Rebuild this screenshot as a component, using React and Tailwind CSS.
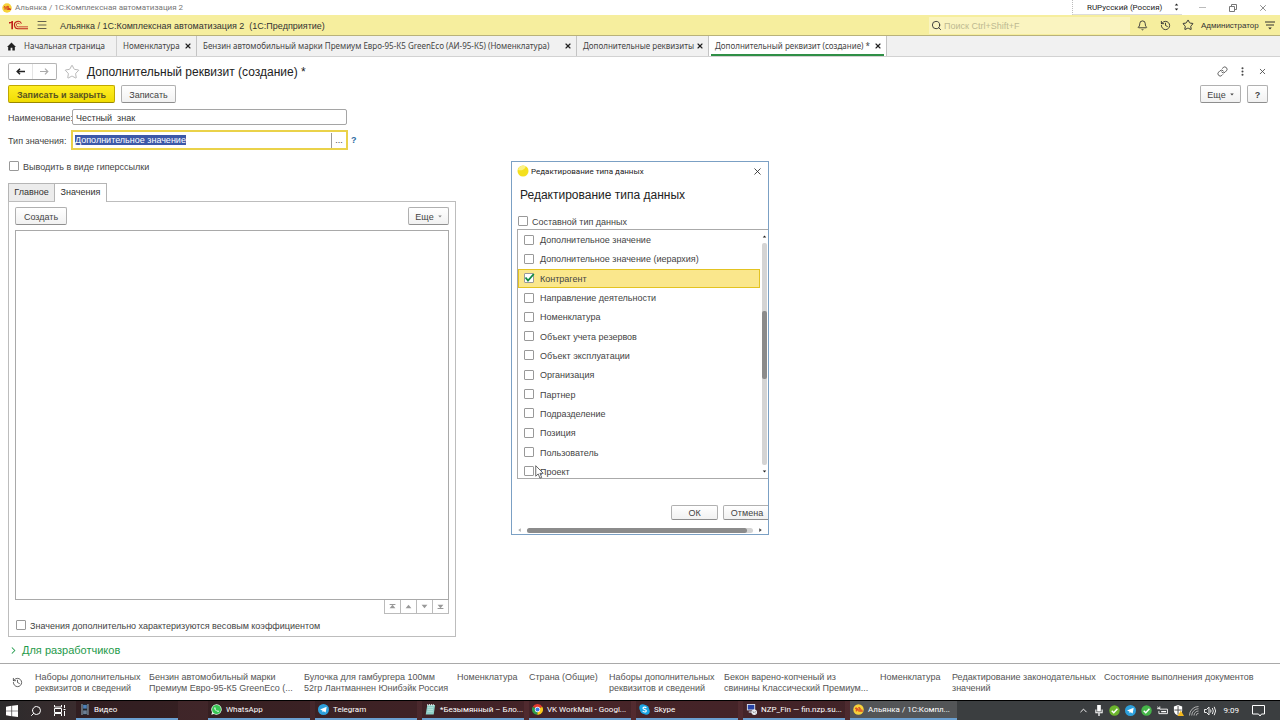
import { useEffect, useRef } from "react";
import { Bell, History, Star, Search, Link, X, Menu, ChevronUp, ChevronRight, MoreVertical } from "lucide-react";

const openTabs = [
  { title: "Номенклатура", width: "w-[80px]" },
  { title: "Бензин автомобильный марки Премиум Евро-95-К5 GreenEco (АИ-95-К5) (Номенклатура)", width: "w-[380px]" },
  { title: "Дополнительные реквизиты", width: "w-[132px]" },
  { title: "Дополнительный реквизит (создание) *", width: "w-[178px]", active: true },
];

const dataTypes = [
  "Дополнительное значение",
  "Дополнительное значение (иерархия)",
  "Контрагент",
  "Направление деятельности",
  "Номенклатура",
  "Объект учета резервов",
  "Объект эксплуатации",
  "Организация",
  "Партнер",
  "Подразделение",
  "Позиция",
  "Пользователь",
  "Проект",
];

const recent = [
  ["Наборы дополнительных", "реквизитов и сведений"],
  ["Бензин автомобильный марки", "Премиум Евро-95-К5 GreenEco (..."],
  ["Булочка для гамбургера 100мм", "52гр Лантманнен Юнибэйк Россия"],
  ["Номенклатура"],
  ["Страна (Общие)"],
  ["Наборы дополнительных", "реквизитов и сведений"],
  ["Бекон варено-копченый из", "свинины Классический Премиум..."],
  ["Номенклатура"],
  ["Редактирование законодательных", "значений"],
  ["Состояние выполнения документов"],
];

function OneCBadge({ className }) {
  return (
    <svg viewBox="0 0 20 20" className={className} aria-hidden="true">
      <circle cx="10" cy="10" r="9.5" fill="#f7d23a" />
      <path d="M3.500 8.500 6 6.800V13.500M14 8.200A3.200 3.200 0 1 0 11.500 13H18M13 10a1.300 1.300 0 1 0-1.200 1H17" fill="none" stroke="#d0271d" strokeWidth="1.600" />
    </svg>
  );
}

function OneCLogo() {
  return (
    <svg viewBox="0 0 57 30" className="h-[10px] w-[19px]" aria-label="1С">
      <g fill="none" stroke="#c0201a">
        <path d="M0 9 9 5M9.500 3V28" strokeWidth="5" />
        <path d="M37.500 11A11 11 0 1 0 28 26H57" strokeWidth="3.200" />
        <path d="M32.500 13A5.500 5.500 0 1 0 28 20.500H57" strokeWidth="2.400" />
      </g>
    </svg>
  );
}

function CheckBox({ id, label, checked, className = "", gap = "gap-[5px]" }) {
  return (
    <div className={`flex items-center ${gap} ${className}`}>
      <span className="grid size-[10px] shrink-0 place-items-center">
        <input
          id={id}
          type="checkbox"
          defaultChecked={checked}
          className="peer col-start-1 row-start-1 size-[10px] appearance-none rounded-[1px] border border-[#999] bg-white"
        />
        <svg viewBox="0 0 10 10" className="pointer-events-none invisible col-start-1 row-start-1 size-[10px] overflow-visible peer-checked:visible" aria-hidden="true">
          <path d="M1.500 4.500 4 7.500 9.800 1" fill="none" stroke="#128a43" strokeWidth="1.800" />
        </svg>
      </span>
      <label htmlFor={id} className="pt-px leading-[12px] whitespace-nowrap">{label}</label>
    </div>
  );
}

function PushButton({ children, height = "h-[18px]", className = "" }) {
  return (
    <button type="button" className={`flex items-center justify-center rounded-[2px] border border-[#b0b0b0] border-b-[#8e8e8e] bg-linear-to-b from-white to-[#f1f1f1] pt-px leading-[12px] text-[#444] ${height} ${className}`}>
      {children}
    </button>
  );
}

function Triangle({ dir, className = "", bar }) {
  return (
    <svg viewBox="0 0 8 6" className={className} fill="currentColor" aria-hidden="true">
      {dir === "up" && <path d="M4 1 7.500 5H.5z" />}
      {dir === "down" && <path d="M4 5 .5 1h7z" />}
      {dir === "left" && <path d="M2 3 6 0v6z" />}
      {dir === "right" && <path d="M6 3 2 0v6z" />}
      {bar && <path d={dir === "up" ? "M.5 0h7v1.200H.5z" : "M.5 4.800h7V6H.5z"} />}
    </svg>
  );
}

function TitleBar() {
  return (
    <header className="flex h-[15px] items-center bg-white pr-[12px] pl-[2px] font-[Roboto,sans-serif] text-[8px] text-[#777]">
      <OneCBadge className="size-[10px]" />
      <span className="ml-[3px] pt-px">Альянка / 1С:Комплексная автоматизация 2</span>
      <div className="ml-auto flex h-full w-[110px] items-center border-b border-l border-b-[#ddd] border-l-[#bbb] pr-[3px] pl-[14px] [border-left-style:dotted]">
        <span className="pt-px whitespace-nowrap text-[#222]">RUРусский (Россия)</span>
        <span className="ml-auto flex flex-col gap-[2px] text-[#222]">
          <Triangle dir="up" className="h-[3px] w-[5px]" />
          <Triangle dir="down" className="h-[3px] w-[5px]" />
        </span>
      </div>
      <button type="button" aria-label="Свернуть" className="ml-[17px] h-px w-[7px] bg-[#bbb]" />
      <button type="button" aria-label="Восстановить" className="ml-[23px]">
        <svg viewBox="0 0 8 8" className="size-[8px]" fill="none" stroke="#777">
          <path d="M.5 2.500h5v5h-5zM2.500 2V.5h5v5H6" />
        </svg>
      </button>
      <button type="button" aria-label="Закрыть" className="ml-[21px]">
        <X className="size-[10px]" strokeWidth={2} />
      </button>
    </header>
  );
}

function AppBar() {
  return (
    <div className="flex h-[21px] items-center border-b border-[#b9b27a] bg-[#f6ee9e] pr-[5px] pl-[9px] text-[9px] text-[#333]">
      <OneCLogo />
      <button type="button" aria-label="Меню" className="ml-[8px]"><Menu className="size-[12px]" strokeWidth={1.5} /></button>
      <span className="ml-[12px] pt-px leading-[12px] whitespace-pre">Альянка / 1С:Комплексная автоматизация 2  (1С:Предприятие)</span>
      <div className="ml-auto flex h-[17px] w-[201px] items-center gap-[2px] bg-[#faf4c0] pl-[2px]">
        <Search className="size-[11px]" strokeWidth={2} />
        <input aria-label="Поиск" placeholder="Поиск Ctrl+Shift+F" className="min-w-0 flex-1 bg-transparent pt-px leading-[12px] outline-none placeholder:text-[#bdb991]" />
      </div>
      <button type="button" aria-label="Уведомления" className="ml-[7px]"><Bell className="size-[11px]" strokeWidth={2} /></button>
      <button type="button" aria-label="История" className="ml-[12px]"><History className="size-[11px]" strokeWidth={2} /></button>
      <button type="button" aria-label="Избранное" className="ml-[11px]"><Star className="size-[12px]" strokeWidth={2} /></button>
      <span className="ml-[7px] w-[64px] pt-px text-[8px] leading-[12px] whitespace-nowrap">Администратор</span>
      <button type="button" aria-label="Параметры">
        <svg viewBox="0 0 10 10" className="size-[10px]" fill="#333">
          <path d="M0 1.500h10v1H0zM1 4.500h8v1H1zM3.200 7.500h3.600L5 9.500z" />
        </svg>
      </button>
    </div>
  );
}

function TabBar() {
  return (
    <nav className="flex h-[21px] items-stretch border-b border-[#d2d2d2] bg-[#f1f1f1] font-['Noto_Sans','Open_Sans',sans-serif] text-[8px] leading-[12px] text-[#444]">
      <a href="#home" className="flex w-[117px] items-center gap-[8px] border-r border-[#cfcfcf] pl-[7px] whitespace-nowrap">
        <svg viewBox="0 0 10 10" className="size-[9px]" fill="#222" aria-hidden="true">
          <path d="M5 .5 10 5.500H8.700V9.500H6V6.500H4v3H1.300V5.500H0z" />
        </svg>
        <span>Начальная страница</span>
      </a>
      {openTabs.map((tab) => (
        <div
          key={tab.title}
          className={`flex items-stretch border-r border-[#c4c4c4] px-[2px] ${tab.width} ${tab.active ? "bg-white" : ""}`}
        >
          <div className={`flex flex-1 items-center justify-between border-b-2 pt-[2px] pr-[2px] pl-[4px] ${tab.active ? "border-[#2f8f46]" : "border-transparent"}`}>
            <a href="#tab" className="whitespace-nowrap">{tab.title}</a>
            <button type="button" aria-label="Закрыть вкладку" className="shrink-0">
              <X className="size-[8px] text-[#222]" strokeWidth={3.500} />
            </button>
          </div>
        </div>
      ))}
    </nav>
  );
}

function RequisiteForm() {
  const typeRef = useRef(null);
  useEffect(() => {
    typeRef.current.focus({ preventScroll: true });
    typeRef.current.select();
  }, []);

  return (
    <main className="flex flex-1 flex-col px-[8px] pt-[6px] text-[9px] text-[#444]">
      <div className="flex h-[17px] items-center">
        <div className="flex h-[17px] w-[49px] rounded-[2px] border border-[#b5b5b5] border-b-[#999]">
          <button type="button" aria-label="Назад" className="grid flex-1 place-items-center border-r border-[#e4e4e4]">
            <svg viewBox="0 0 9 7" className="h-[7px] w-[9px]" fill="none" stroke="#222" strokeWidth="1.500"><path d="M9 3.500H1M4 .7 1.200 3.500 4 6.300" /></svg>
          </button>
          <button type="button" aria-label="Вперед" className="grid flex-1 place-items-center">
            <svg viewBox="0 0 9 7" className="h-[7px] w-[9px]" fill="none" stroke="#aaa" strokeWidth="1.200"><path d="M0 3.500h8M5 .7l2.800 2.800L5 6.300" /></svg>
          </button>
        </div>
        <Star className="ml-[7px] size-[16px] text-[#a5a5a5]" strokeWidth={1.200} />
        <h1 className="ml-[7px] text-[12px] leading-[14px] whitespace-nowrap text-[#222]">Дополнительный реквизит (создание) *</h1>
        <button type="button" aria-label="Ссылка" className="ml-auto"><Link className="size-[11px]" strokeWidth={1.800} /></button>
        <button type="button" aria-label="Действия" className="ml-[9px]"><MoreVertical className="size-[11px]" strokeWidth={2.500} /></button>
        <button type="button" aria-label="Закрыть форму" className="mr-[5px] ml-[10px]"><X className="size-[9px]" strokeWidth={2.200} /></button>
      </div>

      <div className="mt-[5px] flex items-center gap-[6px]">
        <button type="button" className="h-[18px] w-[107px] rounded-[2px] border border-[#c0a800] border-b-[#9a8800] bg-linear-to-b from-[#ffee22] to-[#f0dc00] pt-px leading-[12px] font-bold whitespace-nowrap text-[#5a5420]">
          Записать и закрыть
        </button>
        <PushButton className="w-[55px]">Записать</PushButton>
        <PushButton className="ml-auto w-[41px] gap-[4px]">Еще <Triangle dir="down" className="h-[3px] w-[4px]" /></PushButton>
        <PushButton className="mr-[4px] w-[21px] font-bold">?</PushButton>
      </div>

      <div className="mt-[6px] flex h-[16px] items-center">
        <label htmlFor="name" className="w-[64px] pt-px leading-[12px] whitespace-nowrap">Наименование:</label>
        <input id="name" defaultValue="Честный  знак" className="h-[16px] w-[275px] rounded-[2px] border border-[#a5a5a5] px-[3px] pt-px text-[#333] outline-none" />
      </div>
      <div className="mt-[5px] flex h-[20px] items-center">
        <label htmlFor="value-type" className="w-[63px] pt-px leading-[12px] whitespace-nowrap">Тип значения:</label>
        <div className="flex h-[20px] w-[277px] items-center border-2 border-[#ead24a] bg-white">
          <input
            ref={typeRef}
            id="value-type"
            defaultValue="Дополнительное значение"
            className="h-[14px] min-w-0 flex-1 px-[2px] leading-[10px] outline-none selection:bg-[#3c58a8] selection:text-white"
          />
          <button type="button" aria-label="Выбрать тип" className="h-[15px] w-[15px] border-l border-[#999] leading-[10px]">...</button>
        </div>
        <button type="button" className="ml-[3px] pt-px font-bold text-[#2c6ca3]">?</button>
      </div>
      <CheckBox id="as-link" label="Выводить в виде гиперссылки" className="mt-[10px] h-[12px] px-px" gap="gap-[4px]" />

      <div role="tablist" className="mt-[11px] flex h-[18px] text-[#333]">
        <button role="tab" aria-selected="false" type="button" className="w-[47px] border border-b-0 border-[#b5b5b5] bg-[#ececec]">Главное</button>
        <button role="tab" aria-selected="true" type="button" className="z-10 -mb-px w-[52px] border border-b-0 border-l-0 border-[#b5b5b5] bg-white">Значения</button>
      </div>
      <section className="flex w-[448px] flex-1 flex-col border border-[#bdbdbd] px-[6px] pt-[5px]">
        <div className="flex justify-between">
          <PushButton className="w-[52px]">Создать</PushButton>
          <PushButton className="w-[41px] gap-[4px]">Еще <Triangle dir="down" className="h-[3px] w-[4px] text-[#888]" /></PushButton>
        </div>
        <div className="mt-[5px] flex-1 border border-[#a9a9a9]" />
        <div className="ml-auto flex h-[14px] border-r border-b border-[#bbb] text-[#999]">
          {[["up", true], ["up", false], ["down", false], ["down", true]].map(([dir, bar], i) => (
            <button key={i} type="button" aria-label="Переместить" className="grid w-[16px] place-items-center border-l border-[#bbb]">
              <Triangle dir={dir} bar={bar} className="h-[5px] w-[7px]" />
            </button>
          ))}
        </div>
        <CheckBox id="weighted" label="Значения дополнительно характеризуются весовым коэффициентом" className="mt-[5px] mb-[5px] h-[12px] px-px" gap="gap-[4px]" />
      </section>
      <a href="#dev" className="flex h-[26px] items-center gap-[3px] text-[11px] text-[#1f9a4b]">
        <ChevronRight className="size-[11px]" strokeWidth={2.200} />
        Для разработчиков
      </a>
    </main>
  );
}

function TypeDialog() {
  return (
    <div role="dialog" aria-labelledby="dialog-title" className="absolute top-[161px] left-[511px] flex h-[374px] w-[258px] flex-col overflow-hidden border border-[#7ba0c4] bg-white pl-[5px] text-[9px] text-[#444]">
      <div className="flex h-[18px] shrink-0 items-center pr-[5px] font-[Roboto,sans-serif] text-[8px] text-[#222]">
        <svg viewBox="0 0 12 12" className="size-[12px]" aria-hidden="true">
          <circle cx="6" cy="6" r="5.500" fill="#f4e01e" />
          <path d="M1 5a5 5 0 0 1 8-3.500C7 5 4 6 1 5z" fill="#fbf184" />
        </svg>
        <span className="ml-[2px] pt-px">Редактирование типа данных</span>
        <button type="button" aria-label="Закрыть" className="ml-auto"><X className="size-[11px]" strokeWidth={1.800} /></button>
      </div>
      <h2 id="dialog-title" className="mt-[6px] ml-[3px] h-[18px] shrink-0 text-[12px] leading-[18px] text-[#222]">Редактирование типа данных</h2>
      <CheckBox id="composite" label="Составной тип данных" className="mt-[11px] h-[12px] shrink-0 px-px" gap="gap-[4px]" />
      <div className="mt-[2px] flex h-[250px] shrink-0 overflow-hidden border border-r-0 border-[#aaa]">
        <ul className="grid h-[251px] w-[242px] auto-rows-fr">
          {dataTypes.map((name, i) => (
            <li key={name} className={`flex items-center border px-[5px] ${name === "Контрагент" ? "border-[#e3c321] bg-[#fae78c]" : "border-transparent"}`}>
              <CheckBox id={`type-${i}`} label={name} checked={name === "Контрагент"} gap="gap-[6px]" />
            </li>
          ))}
        </ul>
        <div className="ml-[2px] flex w-[5px] flex-col items-center py-[5px] text-[#222]">
          <Triangle dir="up" className="h-[3px] w-[5px]" />
          <div className="my-[5px] w-[5px] flex-1 rounded-[2px] bg-[#d4d4d4] pt-[68px]">
            <div className="h-[68px] rounded-[2px] bg-[#8b8b8b]" />
          </div>
          <Triangle dir="down" className="h-[3px] w-[5px]" />
        </div>
      </div>
      <div className="mt-[26px] flex shrink-0 gap-[5px] pl-[154px]">
        <PushButton height="h-[15px]" className="w-[47px] shrink-0">ОК</PushButton>
        <PushButton height="h-[15px]" className="w-[48px] shrink-0">Отмена</PushButton>
      </div>
      <div className="mt-[7px] flex h-[6px] shrink-0 items-center pr-[5px] text-[#444]">
        <Triangle dir="left" className="h-[4px] w-[5px] text-[#aaa]" />
        <div className="mx-[5px] h-[5px] flex-1 rounded-full bg-[#d4d4d4] pr-[6px]">
          <div className="h-[5px] rounded-full bg-[#8b8b8b]" />
        </div>
        <Triangle dir="right" className="h-[4px] w-[5px]" />
      </div>
    </div>
  );
}

function RecentBar() {
  return (
    <div className="flex h-[37px] items-center border-t border-[#a9a9a9] bg-white pl-[12px] text-[9px] leading-[11px] text-[#555]">
      <History className="size-[11px] shrink-0 text-[#444]" strokeWidth={1.800} />
      <div className="ml-[12px] grid grid-cols-[114px_155px_153px_72px_80px_115px_156px_72px_152px_auto] pt-px whitespace-nowrap">
        {recent.map((lines, i) => (
          <a key={i} href="#recent" className="block">
            {lines.map((line) => <span key={line} className="block">{line}</span>)}
          </a>
        ))}
      </div>
    </div>
  );
}

function ChromeIcon() {
  return (
    <svg viewBox="0 0 12 12" className="size-[11px]">
      <path d="M6 6 .8 3A6 6 0 0 1 11.200 3z" fill="#e33b2e" />
      <path d="M6 6 .8 3A6 6 0 0 0 6 12z" fill="#2f9e4b" />
      <path d="M6 6 11.200 3A6 6 0 0 1 6 12z" fill="#f8c81c" />
      <circle cx="6" cy="6" r="2.900" fill="#fff" />
      <circle cx="6" cy="6" r="2.200" fill="#3b7de8" />
    </svg>
  );
}

function TelegramIcon() {
  return (
    <svg viewBox="0 0 12 12" className="size-[11px]">
      <circle cx="6" cy="6" r="6" fill="#2da0dc" />
      <path d="M2.200 5.900 9.500 3 8.300 9.300 6.200 7.800 5 9 4.800 7z" fill="#fff" />
    </svg>
  );
}

function CheckBadge({ className }) {
  return (
    <svg viewBox="0 0 12 12" className="size-[11px]">
      <circle cx="6" cy="6" r="5.700" className={className} />
      <path d="M3 6.200 5.200 8.400 9.200 4" fill="none" stroke="#fff" strokeWidth="1.600" />
    </svg>
  );
}

const apps = [
  {
    title: "Видео",
    spacing: "mr-[25px]",
    icon: (
      <svg viewBox="0 0 12 12" className="size-[11px]">
        <path d="M2.500 0h8v12h-8z" fill="#20262e" />
        <path d="M2.500 0h1.500v12H2.500zM9 0h1.500v12H9z" fill="#7e8894" />
        <path d="M4.500 1h4v4h-4z" fill="#4d7fb8" /><path d="M4.500 7h4v4h-4z" fill="#6c7f96" />
      </svg>
    ),
  },
  {
    title: "WhatsApp",
    icon: (
      <svg viewBox="0 0 12 12" className="size-[11px]">
        <path d="M6 .3A5.700 5.700 0 1 1 3.200 11L.3 11.800 1.200 9A5.700 5.700 0 0 1 6 .3z" fill="#e9f9ec" />
        <circle cx="6" cy="6" r="4.900" fill="#37c653" />
        <path d="M4.300 3.200C3 4.200 3.800 6 5 7.200S8 9 8.800 7.800L7.500 6.900l-.7.6C6 7.200 5 6.200 4.700 5.400l.5-.7z" fill="#fff" />
      </svg>
    ),
  },
  { title: "Telegram", icon: <TelegramIcon /> },
  {
    title: "*Безымянный – Бло...",
    icon: (
      <svg viewBox="0 0 12 12" className="size-[11px]">
        <path d="M2.500 1h8.500L9.500 11.500H.8z" fill="#8fd0c8" />
        <path d="M3 0v2M5 0v2M7 0v2M9 0v2" stroke="#e6efef" />
        <path d="M3 4h6M2.800 6h6M2.500 8h6" stroke="#c8ebe6" strokeWidth=".7" />
      </svg>
    ),
  },
  { title: "VK WorkMail - Googl...", icon: <ChromeIcon /> },
  {
    title: "Skype",
    icon: (
      <svg viewBox="0 0 12 12" className="size-[11px]">
        <circle cx="4" cy="4" r="3.700" fill="#1aa6e4" /><circle cx="8" cy="8" r="3.700" fill="#1aa6e4" /><circle cx="6" cy="6" r="5" fill="#1aa6e4" />
        <path d="M8 4.400C7.300 3 4.300 3 4.300 4.600 4.300 6.200 8 5.600 8 7.400 8 9.200 4.700 9 4 7.500" fill="none" stroke="#fff" strokeWidth="1.200" />
      </svg>
    ),
  },
  {
    title: "NZP_Fin — fin.nzp.su...",
    icon: (
      <svg viewBox="0 0 12 12" className="size-[11px]">
        <path d="M1 0h9v7H1z" fill="#d7dce8" /><path d="M2 1h7v5H2z" fill="#2743a5" />
        <path d="M3 8h5v1.500H3z" fill="#b9c0cc" /><circle cx="9" cy="9" r="3" fill="#eef0f4" />
        <path d="m7.500 8 1 1-1 1M10.500 8l-1 1 1 1" fill="none" stroke="#555" strokeWidth=".7" />
      </svg>
    ),
  },
  { title: "Альянка / 1С:Компл...", active: true, icon: <OneCBadge className="size-[11px]" /> },
];

function Taskbar() {
  return (
    <footer className="flex h-[20px] items-stretch border-t border-black bg-[#3b3e40] font-[Roboto,sans-serif] text-[8px] text-white">
      <div className="flex w-[76px] shrink-0 items-center bg-linear-to-r from-[#2c2b2c] to-[#3a2c2e] pl-[6px]">
        <button type="button" aria-label="Пуск">
          <svg viewBox="0 0 11 11" className="size-[12px]" fill="#fff"><path d="M0 1.500 5 .8v4.400H0zM5.600.7 11 0v5.200H5.600zM0 5.800h5v4.400l-5-.7zM5.600 5.800H11V11l-5.400-.7z" /></svg>
        </button>
        <button type="button" aria-label="Поиск" className="ml-[12px]"><Search className="size-[12px] -scale-x-100" strokeWidth={2} /></button>
        <button type="button" aria-label="Представление задач" className="ml-[12px]">
          <svg viewBox="0 0 12 11" className="h-[11px] w-[12px]" fill="none" stroke="#fff"><path d="M.5 0v2h7V0M.5 11V8.500h7V11M.5 3.500h7v4h-7zM10.500 0v3M10.500 6v5M9.500 4.500h2" /></svg>
        </button>
      </div>
      <div className="flex shrink-0 gap-[5px] bg-linear-to-r from-[#3a2427] via-[#542b30] via-60% to-[#4a2a2e]">
        {apps.map((app) => (
          <button
            key={app.title}
            type="button"
            className={`flex items-center gap-[4px] border-b-2 border-[#6a9fd0] pl-[3px] whitespace-nowrap ${app.spacing ?? ""} ${app.active ? "w-[107px] bg-[#535557]" : "w-[102px] bg-black/15"}`}
          >
            <span className="shrink-0">{app.icon}</span>
            <span className="pt-px">{app.title}</span>
          </button>
        ))}
      </div>
      <div className="ml-auto flex items-center gap-[5px] pr-[15px]">
        <ChevronUp className="size-[11px]" strokeWidth={2} />
        <svg viewBox="0 0 10 12" className="h-[11px] w-[10px]" fill="#fff"><path d="M3 0h4v7H3zM1 5h1.200v3h5.600V5H9v4H5.700v3H4.300V9H1z" /></svg>
        <CheckBadge className="fill-[#6cb52d]" />
        <TelegramIcon />
        <CheckBadge className="fill-[#46b649]" />
        <svg viewBox="0 0 12 10" className="h-[9px] w-[11px]" fill="none" stroke="#fff"><path d="M3 3.500h8.500v5H2v-3M0 .5l3 3M0 3h3V.5" /><path d="M4.500 5.500H10v1.500H4.500z" fill="#fff" stroke="none" /></svg>
        <svg viewBox="0 0 12 12" className="size-[11px]"><path d="M5.500 0 10 1.500V6c0 3-2 4.500-4.500 5.500C3 10.500 1 9 1 6V1.500z" fill="#fff" /><path d="M5.500 1v9.500M1.500 5.500h8" stroke="#444" /><path d="m8.500 6 3.500 6H5z" fill="#f4b81e" /></svg>
        <svg viewBox="0 0 11 11" className="size-[10px]" fill="none" stroke="#bbb"><path d="M.5 10.500A10 10 0 0 1 10.500.5M3 10.500A7.500 7.500 0 0 1 10.500 3M5.500 10.500a5 5 0 0 1 5-5M8 10.500A2.500 2.500 0 0 1 10.500 8" /></svg>
        <svg viewBox="0 0 12 10" className="h-[10px] w-[12px]" fill="none" stroke="#eee"><path d="M.5 3.500H2.500L5 1v8L2.500 6.500H.5zM6.500 3.500q1 1.500 0 3M8.300 2q2 3 0 6M10.200.8q2.800 4.200 0 8.400" /></svg>
        <time className="ml-[3px] pt-px">9:09</time>
        <button type="button" aria-label="Уведомления" className="ml-[8px]">
          <svg viewBox="0 0 13 13" className="size-[13px]" fill="none" stroke="#fff"><path d="M.5 1.500h12v8.500H9.500L8 12 6.500 10h-6z" /></svg>
        </button>
      </div>
    </footer>
  );
}

function Cursor() {
  return (
    <svg viewBox="0 0 10 16" className="pointer-events-none absolute top-[465px] left-[535px] h-[14px] w-[9px]" aria-hidden="true">
      <path d="M.7.8v12l2.800-2.600 2 4.800 2-.8-2-4.700H9.300z" fill="#fff" stroke="#555" />
    </svg>
  );
}

export default function App() {
  return (
    <div className="relative flex min-h-screen flex-col bg-white font-['Liberation_Sans',Arial,sans-serif]">
      <TitleBar />
      <AppBar />
      <TabBar />
      <RequisiteForm />
      <RecentBar />
      <Taskbar />
      <TypeDialog />
      <Cursor />
    </div>
  );
}
